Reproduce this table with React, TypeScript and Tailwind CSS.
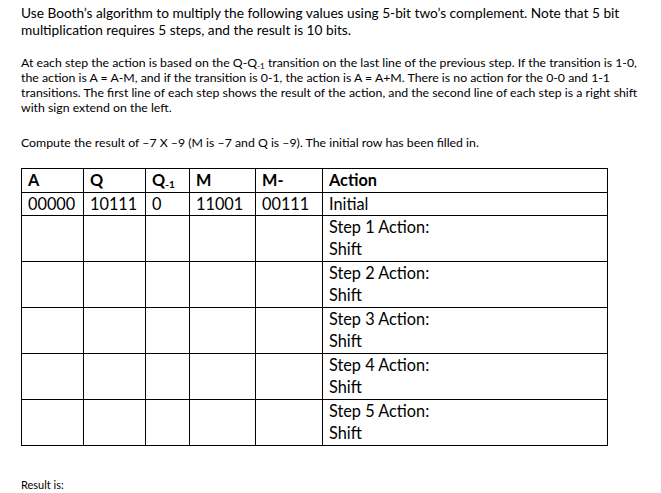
import React from "react";

const steps = [1, 2, 3, 4, 5];

const cell = "border border-black px-[6px] align-top";

const App: React.FC = () => {
  return (
    <div className="w-[661px] h-[493px] bg-white text-black px-[21px] font-['Lato','Liberation_Sans',sans-serif] overflow-hidden">
      <div className="pt-[4px] text-[13.7px] leading-[17px] whitespace-nowrap">
        <div>
          Use Booth’s algorithm to multiply the following values using 5-bit
          two’s complement. Note that 5 bit
        </div>
        <div>multiplication requires 5 steps, and the result is 10 bits.</div>
      </div>

      <div className="mt-[17px] text-[12.3px] leading-[15px] whitespace-nowrap">
        <div className="h-[15px]">
          At each step the action is based on the Q-Q
          <span className="text-[8px] leading-none relative top-[2px]">-1</span>{" "}
          transition on the last line of the previous step. If the transition
          is 1-0,
        </div>
        <div>
          the action is A = A-M, and if the transition is 0-1, the action is A
          = A+M. There is no action for the 0-0 and 1-1
        </div>
        <div>
          transitions. The first line of each step shows the result of the
          action, and the second line of each step is a right shift
        </div>
        <div>with sign extend on the left.</div>
      </div>

      <div className="mt-[20px] text-[12.3px] leading-[15px] whitespace-nowrap">
        Compute the result of –7 X –9 (M is –7 and Q is –9). The initial row
        has been filled in.
      </div>

      <table className="mt-[18px] w-[587px] table-fixed border-collapse text-[16.3px] leading-[22px]">
        <colgroup>
          <col className="w-[62px]" />
          <col className="w-[62px]" />
          <col className="w-[44px]" />
          <col className="w-[66px]" />
          <col className="w-[67px]" />
          <col />
        </colgroup>
        <tbody>
          <tr className="h-[24px] font-bold text-left">
            <td className={cell}>A</td>
            <td className={cell}>Q</td>
            <td className={cell}>
              Q
              <span className="text-[10px] leading-none relative top-[2px]">
                -1
              </span>
            </td>
            <td className={cell}>M</td>
            <td className={cell}>M-</td>
            <td className={cell}>Action</td>
          </tr>
          <tr className="h-[23px]">
            <td className={cell}>00000</td>
            <td className={cell}>10111</td>
            <td className={cell}>0</td>
            <td className={cell}>11001</td>
            <td className={cell}>00111</td>
            <td className={cell}>Initial</td>
          </tr>
          {steps.map((s) => (
            <tr key={s} className="h-[46px]">
              <td className={cell}></td>
              <td className={cell}></td>
              <td className={cell}></td>
              <td className={cell}></td>
              <td className={cell}></td>
              <td className={cell}>
                <div>Step {s} Action:</div>
                <div>Shift</div>
              </td>
            </tr>
          ))}
        </tbody>
      </table>

      <div className="mt-[32px] text-[11px] leading-[14px]">Result is:</div>
    </div>
  );
};

export default App;
